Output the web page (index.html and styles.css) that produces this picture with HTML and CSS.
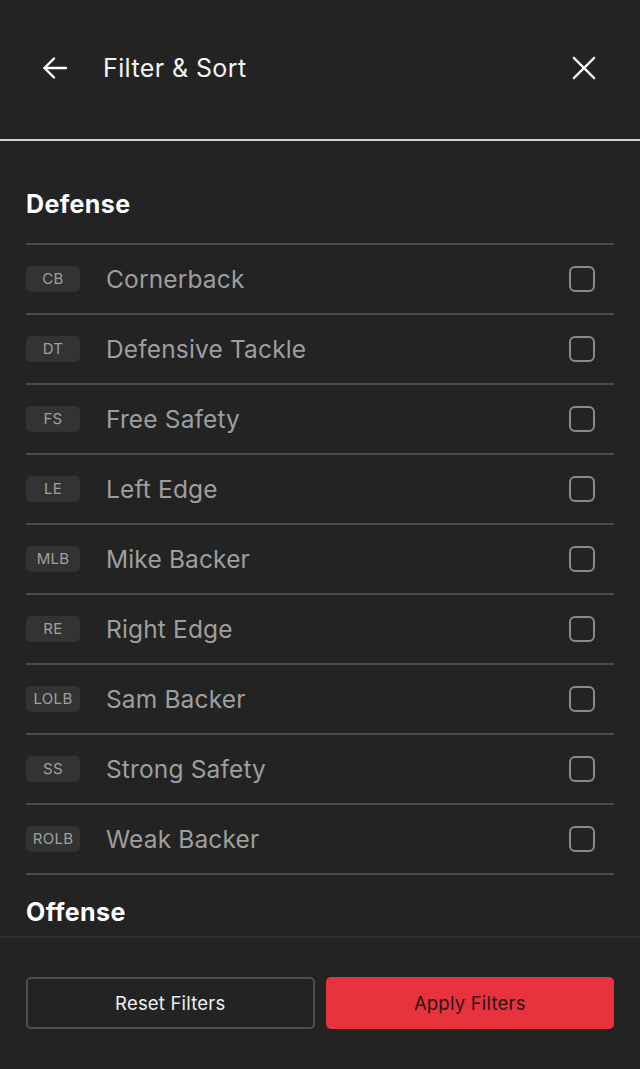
FILE: index.html
```html
<!DOCTYPE html>
<html lang="en">
<head>
<meta charset="utf-8">
<title>Filter &amp; Sort</title>
<link rel="stylesheet" href="styles.css">
</head>
<body>
<div class="screen">
  <header class="topbar">
    <button class="icon-btn back" aria-label="Back">
      <svg width="28" height="28" viewBox="0 0 28 28" fill="none" stroke="#fff" stroke-width="2.4" stroke-linecap="round" stroke-linejoin="round"><path d="M25 14H3.5"/><path d="M13 4.5L3.5 14L13 23.5"/></svg>
    </button>
    <h1 class="title">Filter &amp; Sort</h1>
    <button class="icon-btn close" aria-label="Close">
      <svg width="26" height="26" viewBox="0 0 26 26" fill="none" stroke="#fff" stroke-width="2.4" stroke-linecap="round"><path d="M2 2L24 24"/><path d="M24 2L2 24"/></svg>
    </button>
  </header>

  <main class="content">
    <section class="group">
      <h2 class="group-title">Defense</h2>
      <ul class="list">
        <li class="row"><span class="badge">CB</span><span class="label">Cornerback</span><span class="check"></span></li>
        <li class="row"><span class="badge">DT</span><span class="label">Defensive Tackle</span><span class="check"></span></li>
        <li class="row"><span class="badge">FS</span><span class="label">Free Safety</span><span class="check"></span></li>
        <li class="row"><span class="badge">LE</span><span class="label">Left Edge</span><span class="check"></span></li>
        <li class="row"><span class="badge">MLB</span><span class="label">Mike Backer</span><span class="check"></span></li>
        <li class="row"><span class="badge">RE</span><span class="label">Right Edge</span><span class="check"></span></li>
        <li class="row"><span class="badge">LOLB</span><span class="label">Sam Backer</span><span class="check"></span></li>
        <li class="row"><span class="badge">SS</span><span class="label">Strong Safety</span><span class="check"></span></li>
        <li class="row"><span class="badge">ROLB</span><span class="label">Weak Backer</span><span class="check"></span></li>
      </ul>
    </section>
    <section class="group">
      <h2 class="group-title">Offense</h2>
    </section>
  </main>

  <footer class="footer">
    <button class="btn btn-outline">Reset Filters</button>
    <button class="btn btn-primary">Apply Filters</button>
  </footer>
</div>
</body>
</html>
```

FILE: styles.css
```css
* { box-sizing: border-box; }
html, body {
  margin: 0;
  padding: 0;
  background: #232323;
  font-family: Inter, "Noto Sans", "Liberation Sans", sans-serif;
}
.screen {
  width: 640px;
  height: 1069px;
  display: flex;
  flex-direction: column;
  background: #232323;
  overflow: hidden;
}
.topbar {
  height: 141px;
  flex: none;
  display: flex;
  align-items: center;
  padding: 0 38px 4px 28px;
  border-bottom: 2px solid #d4d4d4;
}
.icon-btn {
  background: none;
  border: 0;
  padding: 0;
  display: flex;
  align-items: center;
  justify-content: center;
  cursor: pointer;
}
.back { width: 52px; height: 40px; justify-content: flex-start; margin-left: 13px; }
.title {
  margin: 0 0 0 10px;
  flex: 1;
  color: #f4f4f4;
  font-size: 25px;
  font-weight: 400;
  letter-spacing: 0.4px;
}
.close { width: 36px; height: 40px; }
.close svg { width: 24px; height: 24px; }
.content {
  flex: 1;
  overflow: hidden;
  padding: 24px 26px 0 26px;
}
.group-title {
  margin: 0;
  padding: 24px 0;
  line-height: 30px;
  font-size: 25px;
  font-weight: 700;
  letter-spacing: 0.4px;
  color: #ffffff;
}
.list {
  list-style: none;
  margin: 0 0 -2px;
  padding: 0;
  border-top: 2px solid #4a4a4a;
}
.row {
  height: 70px;
  display: flex;
  align-items: center;
  padding-bottom: 1px;
  border-bottom: 2px solid #4a4a4a;
}
.badge {
  width: 54px;
  height: 26px;
  border-radius: 5px;
  background: #333333;
  color: #a0a0a0;
  font-size: 15px;
  letter-spacing: 0.3px;
  display: flex;
  align-items: center;
  justify-content: center;
  flex: none;
}
.label {
  flex: 1;
  margin-left: 26px;
  color: #9e9e9e;
  font-size: 24.5px;
  letter-spacing: 0.15px;
}
.check {
  width: 26px;
  height: 26px;
  border: 2.5px solid #8a8a8a;
  border-radius: 6px;
  margin-right: 19px;
  flex: none;
}
.footer {
  flex: none;
  border-top: 2px solid #303030;
  display: grid;
  grid-template-columns: 1fr 1fr;
  gap: 11px;
  padding: 39px 26px 40px;
}
.btn {
  height: 52px;
  border-radius: 5px;
  font-family: inherit;
  font-size: 18.5px;
  letter-spacing: 0.2px;
  cursor: pointer;
}
.btn-outline {
  background: transparent;
  border: 2px solid #4e4e4e;
  color: #f0f0f0;
}
.btn-primary {
  background: #e8333f;
  border: 0;
  color: #2a1416;
}
```
